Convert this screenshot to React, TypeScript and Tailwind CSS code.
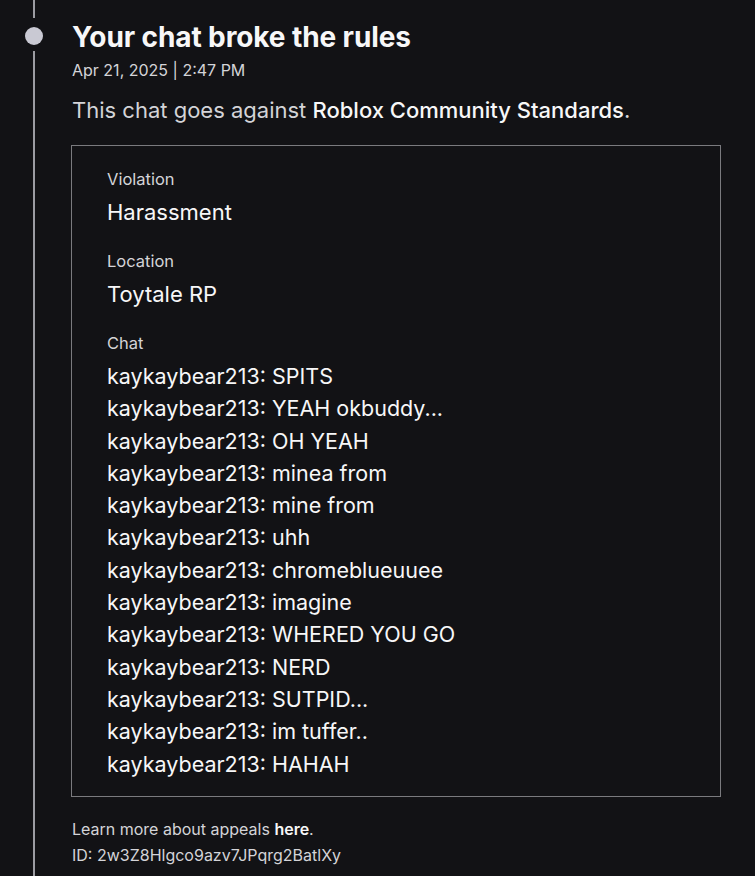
import React from "react";

const chat = [
  "SPITS",
  "YEAH okbuddy...",
  "OH YEAH",
  "minea from",
  "mine from",
  "uhh",
  "chromeblueuuee",
  "imagine",
  "WHERED YOU GO",
  "NERD",
  "SUTPID...",
  "im tuffer..",
  "HAHAH",
];

export default function App() {
  return (
    <div
      className="w-[755px] h-[876px] overflow-hidden bg-[#121215] text-[#f7f7f8] flex"
      style={{ fontFamily: "Inter, 'Noto Sans', sans-serif" }}
    >
      <div className="w-[68px] shrink-0 flex flex-col items-center">
        <div className="w-[2px] h-[18px] bg-[#9c9ca2]" />
        <div className="w-[18px] h-[18px] rounded-full bg-[#c9c9d3] mt-[9px]" />
        <div className="w-[2px] flex-1 bg-[#9c9ca2] mt-[6px]" />
      </div>
      <div className="ml-[3px] w-[650px] flex flex-col pt-[21px]">
        <div className="text-[28px] leading-[32px] font-bold tracking-[-0.1px] pl-[1px]">
          Your chat broke the rules
        </div>
        <div className="mt-[6px] text-[16px] leading-[22px] text-[#d4d4d8] pl-[1px]">
          Apr 21, 2025 | 2:47 PM
        </div>
        <div className="mt-[14px] text-[22px] leading-[30px] text-[#d4d4d8] pl-[1px]">
          This chat goes against{" "}
          <span className="text-[#f7f7f8] font-medium">Roblox Community Standards</span>.
        </div>
        <div className="mt-[20px] border border-[#7a7a7e] pl-[35px] pt-[22px] pb-[16px]">
          <div className="text-[16.5px] leading-[22px] text-[#d4d4d8]">Violation</div>
          <div className="mt-[6px] text-[22px] leading-[32px]">Harassment</div>
          <div className="mt-[22px] text-[16.5px] leading-[22px] text-[#d4d4d8]">Location</div>
          <div className="mt-[6px] text-[22px] leading-[32px]">Toytale RP</div>
          <div className="mt-[22px] text-[16.5px] leading-[22px] text-[#d4d4d8]">Chat</div>
          <div className="mt-[6px] flex flex-col">
            {chat.map((c, i) => (
              <div key={i} className="text-[21.5px] leading-[32.3px]">
                kaykaybear213: {c}
              </div>
            ))}
          </div>
        </div>
        <div className="mt-[19px] text-[16px] leading-[26px] text-[#d4d4d8] pl-[1px]">
          Learn more about appeals{" "}
          <span className="text-[#f7f7f8] font-semibold">here</span>.
        </div>
        <div className="text-[16px] leading-[26px] text-[#d4d4d8] pl-[1px]">
          ID: 2w3Z8Hlgco9azv7JPqrg2BatlXy
        </div>
      </div>
    </div>
  );
}
